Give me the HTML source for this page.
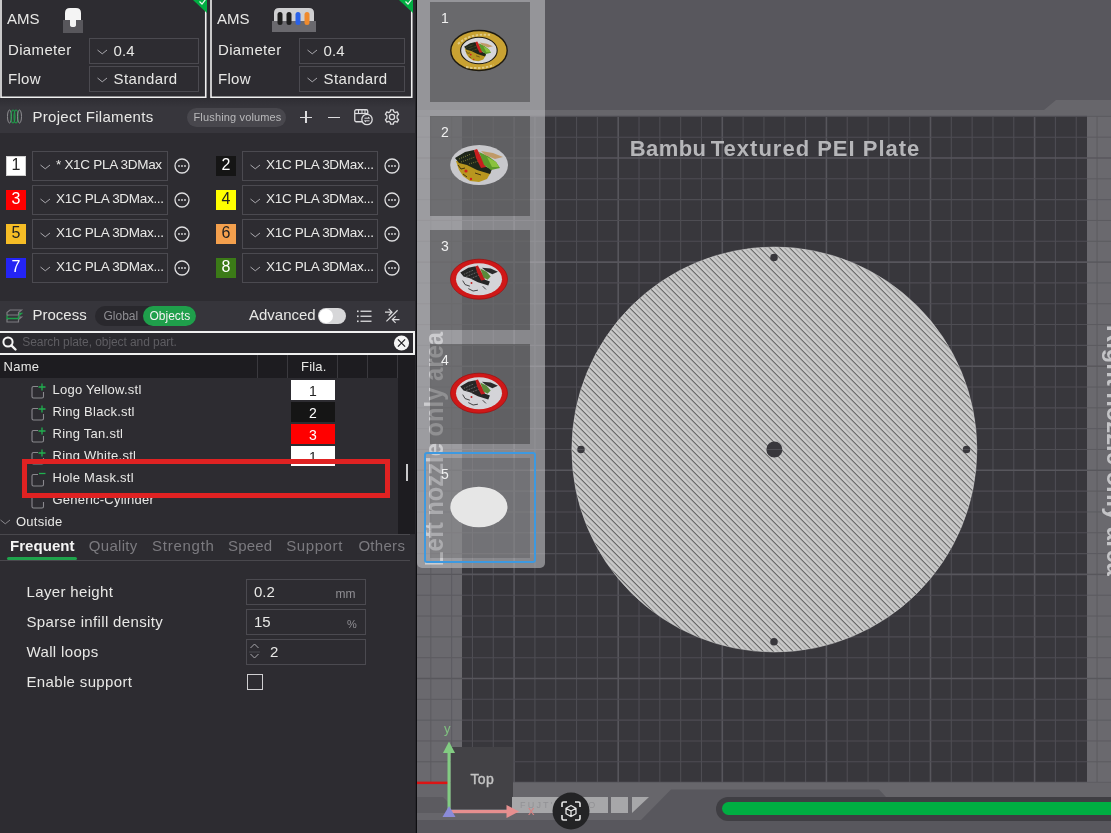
<!DOCTYPE html>
<html><head><meta charset="utf-8">
<style>
*{margin:0;padding:0;box-sizing:border-box}
html,body{width:1111px;height:833px;overflow:hidden;background:#2d2c31;font-family:"Liberation Sans",sans-serif;color:#e5e5e4}
.a{position:absolute}
.t{position:absolute;white-space:nowrap;line-height:1}
svg{position:absolute;overflow:visible}
</style></head><body>
<div class="a" style="left:0px;top:0px;width:415px;height:833px;background:#2d2c31;"></div>
<svg style="left:0px;top:0" width="209" height="100"><path d="M1.0 -2 L1.0 97.25 L205.75 97.25 L205.75 -2" fill="none" stroke="#f0f0f0" stroke-width="1.6"/></svg>
<svg style="left:193px;top:0" width="14" height="13"><path d="M0 0 L14 0 L14 13 Z" fill="#00ae42"/><path d="M6.5 1.5 L9 4 L12.5 -0.5" fill="none" stroke="#e8f5ec" stroke-width="1.2"/></svg>
<div class="t" style="left:7px;top:11.30px;font-size:15px;color:#e8e8e6;font-weight:400;letter-spacing:0px;">AMS</div>
<div class="t" style="left:8px;top:42.30px;font-size:15px;color:#e8e8e6;font-weight:400;letter-spacing:0.35px;">Diameter</div>
<div class="t" style="left:8px;top:70.80px;font-size:15px;color:#e8e8e6;font-weight:400;letter-spacing:0.3px;">Flow</div>
<svg style="left:210px;top:0" width="205" height="100"><path d="M1.0 -2 L1.0 97.25 L201.75 97.25 L201.75 -2" fill="none" stroke="#f0f0f0" stroke-width="1.6"/></svg>
<svg style="left:399px;top:0" width="14" height="13"><path d="M0 0 L14 0 L14 13 Z" fill="#00ae42"/><path d="M6.5 1.5 L9 4 L12.5 -0.5" fill="none" stroke="#e8f5ec" stroke-width="1.2"/></svg>
<div class="t" style="left:217px;top:11.30px;font-size:15px;color:#e8e8e6;font-weight:400;letter-spacing:0px;">AMS</div>
<div class="t" style="left:218px;top:42.30px;font-size:15px;color:#e8e8e6;font-weight:400;letter-spacing:0.35px;">Diameter</div>
<div class="t" style="left:218px;top:70.80px;font-size:15px;color:#e8e8e6;font-weight:400;letter-spacing:0.3px;">Flow</div>
<div class="a" style="left:89px;top:38px;width:110px;height:26px;border:1px solid #4b4a50;"></div>
<div class="a" style="left:89px;top:66px;width:110px;height:26px;border:1px solid #4b4a50;"></div>
<svg style="left:97px;top:49px" width="11" height="6"><path d="M0.5 1 L5.25 4.8 L10 1" fill="none" stroke="#a9a8ad" stroke-width="1"/></svg>
<svg style="left:97px;top:77px" width="11" height="6"><path d="M0.5 1 L5.25 4.8 L10 1" fill="none" stroke="#a9a8ad" stroke-width="1"/></svg>
<div class="t" style="left:113.5px;top:42.80px;font-size:15px;color:#e8e8e6;font-weight:400;letter-spacing:0.1px;">0.4</div>
<div class="t" style="left:113.5px;top:71.00px;font-size:15px;color:#e8e8e6;font-weight:400;letter-spacing:0.4px;">Standard</div>
<div class="a" style="left:299px;top:38px;width:106px;height:26px;border:1px solid #4b4a50;"></div>
<div class="a" style="left:299px;top:66px;width:106px;height:26px;border:1px solid #4b4a50;"></div>
<svg style="left:307px;top:49px" width="11" height="6"><path d="M0.5 1 L5.25 4.8 L10 1" fill="none" stroke="#a9a8ad" stroke-width="1"/></svg>
<svg style="left:307px;top:77px" width="11" height="6"><path d="M0.5 1 L5.25 4.8 L10 1" fill="none" stroke="#a9a8ad" stroke-width="1"/></svg>
<div class="t" style="left:323.5px;top:42.80px;font-size:15px;color:#e8e8e6;font-weight:400;letter-spacing:0.1px;">0.4</div>
<div class="t" style="left:323.5px;top:71.00px;font-size:15px;color:#e8e8e6;font-weight:400;letter-spacing:0.4px;">Standard</div>
<svg style="left:63px;top:8px" width="20" height="25">
<rect x="0" y="12" width="20" height="13" fill="#58575c"/>
<path d="M2 5 Q2 0 7 0 L13 0 Q18 0 18 5 L18 12 L13 12 L13 17 Q13 19 10 19 Q7 19 7 17 L7 12 L2 12 Z" fill="#f4f4f4"/>
</svg>
<svg style="left:272px;top:8px" width="44" height="24">
<rect x="0" y="13" width="44" height="11" fill="#6a696e"/>
<path d="M2 13 L2 5 Q2 0 7 0 L37 0 Q42 0 42 5 L42 13 Z" fill="#cfcfd1"/>
<rect x="5.5" y="4" width="5" height="13" rx="2.5" fill="#1e1e1e"/>
<rect x="14.5" y="4" width="5" height="13" rx="2.5" fill="#1e1e1e"/>
<rect x="23.5" y="4" width="5" height="13" rx="2.5" fill="#2a62e8"/>
<rect x="32.5" y="4" width="5" height="13" rx="2.5" fill="#f08a2c"/>
</svg>
<div class="a" style="left:0px;top:99px;width:415px;height:34px;background:linear-gradient(#2f2e34,#37363c 25%,#37363c);"></div>
<svg style="left:7px;top:109px" width="16" height="15">
<ellipse cx="2.5" cy="7.5" rx="2" ry="6.5" fill="none" stroke="#8d8c90" stroke-width="1"/>
<ellipse cx="6" cy="7.5" rx="2" ry="6.5" fill="none" stroke="#1f9d4a" stroke-width="1.1"/>
<ellipse cx="9" cy="7.5" rx="2" ry="6.5" fill="none" stroke="#1f9d4a" stroke-width="1.1"/>
<ellipse cx="12.5" cy="7.5" rx="2" ry="6.5" fill="none" stroke="#8d8c90" stroke-width="1"/>
</svg>
<div class="t" style="left:32.5px;top:109.30px;font-size:15px;color:#e8e8e6;font-weight:400;letter-spacing:0.3px;">Project Filaments</div>
<div class="a" style="left:187px;top:108px;width:99px;height:19px;background:#48474d;border-radius:10px"></div>
<div class="t" style="left:193.5px;top:111.69px;font-size:11px;color:#b9b9bb;font-weight:400;letter-spacing:0.15px;">Flushing volumes</div>
<div class="a" style="left:300px;top:116.5px;width:12px;height:1.5px;background:#dcdcde;"></div>
<div class="a" style="left:305.25px;top:111px;width:1.5px;height:12px;background:#dcdcde;"></div>
<div class="a" style="left:328px;top:116.5px;width:12px;height:1.5px;background:#dcdcde;"></div>
<svg style="left:354px;top:109px" width="19" height="16">
<rect x="0.75" y="0.75" width="13" height="12" rx="1.5" fill="none" stroke="#dcdcde" stroke-width="1.3"/>
<line x1="1" y1="4.5" x2="14" y2="4.5" stroke="#dcdcde" stroke-width="1.2"/>
<line x1="4.5" y1="1" x2="4.5" y2="4.5" stroke="#dcdcde" stroke-width="1"/><line x1="8" y1="1" x2="8" y2="4.5" stroke="#dcdcde" stroke-width="1"/><line x1="11" y1="1" x2="11" y2="4.5" stroke="#dcdcde" stroke-width="1"/>
<circle cx="13" cy="10.5" r="5.2" fill="#36353b" stroke="#dcdcde" stroke-width="1.3"/>
<path d="M10.5 9.2 L15.5 9.2 M14 8 L15.5 9.2 M15.5 11.8 L10.5 11.8 L12 13" fill="none" stroke="#dcdcde" stroke-width="1"/>
</svg>
<svg style="left:384px;top:109px" width="16" height="16" viewBox="0 0 16 16">
<path d="M6.6 0.8 L9.4 0.8 L9.8 2.8 L11.3 3.6 L13.2 2.9 L14.6 5.3 L13.1 6.7 L13.1 9.3 L14.6 10.7 L13.2 13.1 L11.3 12.4 L9.8 13.2 L9.4 15.2 L6.6 15.2 L6.2 13.2 L4.7 12.4 L2.8 13.1 L1.4 10.7 L2.9 9.3 L2.9 6.7 L1.4 5.3 L2.8 2.9 L4.7 3.6 L6.2 2.8 Z" fill="none" stroke="#dcdcde" stroke-width="1.3" stroke-linejoin="round"/>
<circle cx="8" cy="8" r="2.6" fill="none" stroke="#dcdcde" stroke-width="1.3"/>
</svg>
<div class="a" style="left:6px;top:156px;width:20px;height:20px;background:#ffffff;border:1px solid #cfcfcf;"></div>
<div class="t" style="left:11.5px;top:157.46px;font-size:16px;color:#222;font-weight:400;letter-spacing:0px;">1</div>
<div class="a" style="left:32px;top:151px;width:136px;height:30px;border:1px solid #4b4a50;"></div>
<svg style="left:40px;top:164px" width="11" height="6"><path d="M0.5 1 L5.25 4.8 L10 1" fill="none" stroke="#a9a8ad" stroke-width="1"/></svg>
<div class="t" style="left:56px;top:158.27px;font-size:13.5px;color:#e8e8e6;font-weight:400;letter-spacing:-0.3px;">* X1C PLA 3DMax</div>
<svg style="left:174px;top:158px" width="16" height="16"><circle cx="8" cy="8" r="7" fill="none" stroke="#dedee0" stroke-width="1.3"/><circle cx="5" cy="8" r="0.9" fill="#dedee0"/><circle cx="8" cy="8" r="0.9" fill="#dedee0"/><circle cx="11" cy="8" r="0.9" fill="#dedee0"/></svg>
<div class="a" style="left:216px;top:156px;width:20px;height:20px;background:#151515;"></div>
<div class="t" style="left:221.5px;top:157.46px;font-size:16px;color:#fff;font-weight:400;letter-spacing:0px;">2</div>
<div class="a" style="left:242px;top:151px;width:136px;height:30px;border:1px solid #4b4a50;"></div>
<svg style="left:250px;top:164px" width="11" height="6"><path d="M0.5 1 L5.25 4.8 L10 1" fill="none" stroke="#a9a8ad" stroke-width="1"/></svg>
<div class="t" style="left:266px;top:158.27px;font-size:13.5px;color:#e8e8e6;font-weight:400;letter-spacing:-0.3px;">X1C PLA 3DMax...</div>
<svg style="left:384px;top:158px" width="16" height="16"><circle cx="8" cy="8" r="7" fill="none" stroke="#dedee0" stroke-width="1.3"/><circle cx="5" cy="8" r="0.9" fill="#dedee0"/><circle cx="8" cy="8" r="0.9" fill="#dedee0"/><circle cx="11" cy="8" r="0.9" fill="#dedee0"/></svg>
<div class="a" style="left:6px;top:190px;width:20px;height:20px;background:#ff0000;"></div>
<div class="t" style="left:11.5px;top:191.46px;font-size:16px;color:#fff;font-weight:400;letter-spacing:0px;">3</div>
<div class="a" style="left:32px;top:185px;width:136px;height:30px;border:1px solid #4b4a50;"></div>
<svg style="left:40px;top:198px" width="11" height="6"><path d="M0.5 1 L5.25 4.8 L10 1" fill="none" stroke="#a9a8ad" stroke-width="1"/></svg>
<div class="t" style="left:56px;top:192.27px;font-size:13.5px;color:#e8e8e6;font-weight:400;letter-spacing:-0.3px;">X1C PLA 3DMax...</div>
<svg style="left:174px;top:192px" width="16" height="16"><circle cx="8" cy="8" r="7" fill="none" stroke="#dedee0" stroke-width="1.3"/><circle cx="5" cy="8" r="0.9" fill="#dedee0"/><circle cx="8" cy="8" r="0.9" fill="#dedee0"/><circle cx="11" cy="8" r="0.9" fill="#dedee0"/></svg>
<div class="a" style="left:216px;top:190px;width:20px;height:20px;background:#ffff00;"></div>
<div class="t" style="left:221.5px;top:191.46px;font-size:16px;color:#222;font-weight:400;letter-spacing:0px;">4</div>
<div class="a" style="left:242px;top:185px;width:136px;height:30px;border:1px solid #4b4a50;"></div>
<svg style="left:250px;top:198px" width="11" height="6"><path d="M0.5 1 L5.25 4.8 L10 1" fill="none" stroke="#a9a8ad" stroke-width="1"/></svg>
<div class="t" style="left:266px;top:192.27px;font-size:13.5px;color:#e8e8e6;font-weight:400;letter-spacing:-0.3px;">X1C PLA 3DMax...</div>
<svg style="left:384px;top:192px" width="16" height="16"><circle cx="8" cy="8" r="7" fill="none" stroke="#dedee0" stroke-width="1.3"/><circle cx="5" cy="8" r="0.9" fill="#dedee0"/><circle cx="8" cy="8" r="0.9" fill="#dedee0"/><circle cx="11" cy="8" r="0.9" fill="#dedee0"/></svg>
<div class="a" style="left:6px;top:224px;width:20px;height:20px;background:#f6bd26;"></div>
<div class="t" style="left:11.5px;top:225.46px;font-size:16px;color:#222;font-weight:400;letter-spacing:0px;">5</div>
<div class="a" style="left:32px;top:219px;width:136px;height:30px;border:1px solid #4b4a50;"></div>
<svg style="left:40px;top:232px" width="11" height="6"><path d="M0.5 1 L5.25 4.8 L10 1" fill="none" stroke="#a9a8ad" stroke-width="1"/></svg>
<div class="t" style="left:56px;top:226.27px;font-size:13.5px;color:#e8e8e6;font-weight:400;letter-spacing:-0.3px;">X1C PLA 3DMax...</div>
<svg style="left:174px;top:226px" width="16" height="16"><circle cx="8" cy="8" r="7" fill="none" stroke="#dedee0" stroke-width="1.3"/><circle cx="5" cy="8" r="0.9" fill="#dedee0"/><circle cx="8" cy="8" r="0.9" fill="#dedee0"/><circle cx="11" cy="8" r="0.9" fill="#dedee0"/></svg>
<div class="a" style="left:216px;top:224px;width:20px;height:20px;background:#f4a04d;"></div>
<div class="t" style="left:221.5px;top:225.46px;font-size:16px;color:#222;font-weight:400;letter-spacing:0px;">6</div>
<div class="a" style="left:242px;top:219px;width:136px;height:30px;border:1px solid #4b4a50;"></div>
<svg style="left:250px;top:232px" width="11" height="6"><path d="M0.5 1 L5.25 4.8 L10 1" fill="none" stroke="#a9a8ad" stroke-width="1"/></svg>
<div class="t" style="left:266px;top:226.27px;font-size:13.5px;color:#e8e8e6;font-weight:400;letter-spacing:-0.3px;">X1C PLA 3DMax...</div>
<svg style="left:384px;top:226px" width="16" height="16"><circle cx="8" cy="8" r="7" fill="none" stroke="#dedee0" stroke-width="1.3"/><circle cx="5" cy="8" r="0.9" fill="#dedee0"/><circle cx="8" cy="8" r="0.9" fill="#dedee0"/><circle cx="11" cy="8" r="0.9" fill="#dedee0"/></svg>
<div class="a" style="left:6px;top:258px;width:20px;height:20px;background:#2424f4;"></div>
<div class="t" style="left:11.5px;top:259.46px;font-size:16px;color:#fff;font-weight:400;letter-spacing:0px;">7</div>
<div class="a" style="left:32px;top:253px;width:136px;height:30px;border:1px solid #4b4a50;"></div>
<svg style="left:40px;top:266px" width="11" height="6"><path d="M0.5 1 L5.25 4.8 L10 1" fill="none" stroke="#a9a8ad" stroke-width="1"/></svg>
<div class="t" style="left:56px;top:260.27px;font-size:13.5px;color:#e8e8e6;font-weight:400;letter-spacing:-0.3px;">X1C PLA 3DMax...</div>
<svg style="left:174px;top:260px" width="16" height="16"><circle cx="8" cy="8" r="7" fill="none" stroke="#dedee0" stroke-width="1.3"/><circle cx="5" cy="8" r="0.9" fill="#dedee0"/><circle cx="8" cy="8" r="0.9" fill="#dedee0"/><circle cx="11" cy="8" r="0.9" fill="#dedee0"/></svg>
<div class="a" style="left:216px;top:258px;width:20px;height:20px;background:#3b7a17;"></div>
<div class="t" style="left:221.5px;top:259.46px;font-size:16px;color:#fff;font-weight:400;letter-spacing:0px;">8</div>
<div class="a" style="left:242px;top:253px;width:136px;height:30px;border:1px solid #4b4a50;"></div>
<svg style="left:250px;top:266px" width="11" height="6"><path d="M0.5 1 L5.25 4.8 L10 1" fill="none" stroke="#a9a8ad" stroke-width="1"/></svg>
<div class="t" style="left:266px;top:260.27px;font-size:13.5px;color:#e8e8e6;font-weight:400;letter-spacing:-0.3px;">X1C PLA 3DMax...</div>
<svg style="left:384px;top:260px" width="16" height="16"><circle cx="8" cy="8" r="7" fill="none" stroke="#dedee0" stroke-width="1.3"/><circle cx="5" cy="8" r="0.9" fill="#dedee0"/><circle cx="8" cy="8" r="0.9" fill="#dedee0"/><circle cx="11" cy="8" r="0.9" fill="#dedee0"/></svg>
<div class="a" style="left:0px;top:301px;width:415px;height:30px;background:#36353b;"></div>
<svg style="left:6px;top:308px" width="17" height="16">
<path d="M1 11.5 L4 9 L15.5 9 L12.5 11.5 L12.5 14 L1 14 Z" fill="none" stroke="#7d7c81" stroke-width="1.2"/>
<path d="M1 8 L4 5.5 L15.5 5.5 L12.5 8 L12.5 10.5 L1 10.5 Z" fill="#36353b" stroke="#1f9d4a" stroke-width="1.3"/>
<path d="M1 4.5 L4 2 L15.5 2 L12.5 4.5 L12.5 7 L1 7 Z" fill="#36353b" stroke="#7d7c81" stroke-width="1.2"/>
</svg>
<div class="t" style="left:32.5px;top:307.30px;font-size:15px;color:#e8e8e6;font-weight:400;letter-spacing:0px;">Process</div>
<div class="a" style="left:95px;top:306px;width:101px;height:20px;background:#29282d;border-radius:10px"></div>
<div class="t" style="left:103.5px;top:309.84px;font-size:12px;color:#8e8d92;font-weight:400;letter-spacing:0px;">Global</div>
<div class="a" style="left:143px;top:306px;width:53px;height:20px;background:#1f9f4b;border-radius:10px"></div>
<div class="t" style="left:149.5px;top:310.34px;font-size:12px;color:#f2f2f2;font-weight:400;letter-spacing:0px;">Objects</div>
<div class="t" style="left:249px;top:307.30px;font-size:15px;color:#e8e8e6;font-weight:400;letter-spacing:0px;">Advanced</div>
<div class="a" style="left:318px;top:308px;width:28px;height:16px;background:#d7d7d9;border-radius:8px"></div>
<div class="a" style="left:319px;top:309px;width:14px;height:14px;border-radius:7px;background:#ffffff"></div>
<svg style="left:357px;top:310px" width="15" height="13">
<rect x="0" y="0.5" width="1.6" height="1.6" fill="#dcdcde"/><rect x="3.5" y="0.6" width="11" height="1.3" fill="#dcdcde"/>
<rect x="0" y="5.5" width="1.6" height="1.6" fill="#dcdcde"/><rect x="3.5" y="5.6" width="11" height="1.3" fill="#dcdcde"/>
<rect x="0" y="10.5" width="1.6" height="1.6" fill="#dcdcde"/><rect x="3.5" y="10.6" width="11" height="1.3" fill="#dcdcde"/>
</svg>
<svg style="left:0;top:0" width="415" height="340">
<path d="M385 312.2 L392 312.2 M388.7 308.9 L392 312.2 L388.7 315.5" fill="none" stroke="#dcdcde" stroke-width="1.2"/>
<path d="M399.5 319.6 L392.3 319.6 M395.6 316.3 L392.3 319.6 L395.6 322.9" fill="none" stroke="#dcdcde" stroke-width="1.2"/>
<path d="M397.6 310.3 L386.4 321.4" fill="none" stroke="#dcdcde" stroke-width="1.2"/>
</svg>
<div class="a" style="left:-2px;top:331px;width:417px;height:24px;border:2px solid #f0f0f0;background:#2a292e"></div>
<svg style="left:2px;top:336px" width="15" height="15">
<circle cx="6" cy="6" r="4.6" fill="none" stroke="#f4f4f4" stroke-width="2"/>
<path d="M9.3 9.3 L13.5 13.5" stroke="#f4f4f4" stroke-width="2.4" stroke-linecap="round"/>
</svg>
<div class="t" style="left:22.3px;top:335.84px;font-size:12px;color:#5e5d62;font-weight:400;letter-spacing:-0.08px;">Search plate, object and part.</div>
<svg style="left:394px;top:335.5px" width="15" height="15">
<circle cx="7.5" cy="7" r="7.6" fill="#f4f4f4"/>
<path d="M3.9 3.4 L11.1 10.6 M11.1 3.4 L3.9 10.6" stroke="#202024" stroke-width="1.2"/>
</svg>
<div class="a" style="left:0px;top:355px;width:415px;height:23px;background:#1d1c20;"></div>
<div class="t" style="left:3.5px;top:360.00px;font-size:13px;color:#e8e8e6;font-weight:400;letter-spacing:0.3px;">Name</div>
<div class="a" style="left:257px;top:355px;width:1px;height:23px;background:#3a393e;"></div>
<div class="a" style="left:287px;top:355px;width:1px;height:23px;background:#3a393e;"></div>
<div class="a" style="left:337px;top:355px;width:1px;height:23px;background:#3a393e;"></div>
<div class="a" style="left:367px;top:355px;width:1px;height:23px;background:#3a393e;"></div>
<div class="a" style="left:397px;top:355px;width:1px;height:23px;background:#3a393e;"></div>
<div class="t" style="left:301px;top:359.50px;font-size:13px;color:#e8e8e6;font-weight:400;letter-spacing:0.2px;">Fila.</div>
<div class="a" style="left:0px;top:378px;width:398px;height:156px;background:#2d2c31;"></div>
<div class="a" style="left:398px;top:378px;width:17px;height:156px;background:#1d1c20;"></div>
<div class="a" style="left:406px;top:464px;width:2px;height:17px;background:#c9c9cb;"></div>
<div class="t" style="left:52.5px;top:382.50px;font-size:13px;color:#e8e8e6;font-weight:400;letter-spacing:0.25px;">Logo Yellow.stl</div>
<svg style="left:31px;top:382.5px" width="16" height="16"><path d="M7 3.5 L2.5 3.5 Q1 3.5 1 5 L1 13.5 Q1 15 2.5 15 L11 15 Q12.5 15 12.5 13.5 L12.5 9" fill="none" stroke="#8a898e" stroke-width="1.1"/><path d="M11 0.5 L11 7.5 M7.5 4 L14.5 4" stroke="#20b04f" stroke-width="1.3"/></svg>
<div class="t" style="left:52.5px;top:404.50px;font-size:13px;color:#e8e8e6;font-weight:400;letter-spacing:0.25px;">Ring Black.stl</div>
<svg style="left:31px;top:404.5px" width="16" height="16"><path d="M7 3.5 L2.5 3.5 Q1 3.5 1 5 L1 13.5 Q1 15 2.5 15 L11 15 Q12.5 15 12.5 13.5 L12.5 9" fill="none" stroke="#8a898e" stroke-width="1.1"/><path d="M11 0.5 L11 7.5 M7.5 4 L14.5 4" stroke="#20b04f" stroke-width="1.3"/></svg>
<div class="t" style="left:52.5px;top:426.50px;font-size:13px;color:#e8e8e6;font-weight:400;letter-spacing:0.25px;">Ring Tan.stl</div>
<svg style="left:31px;top:426.5px" width="16" height="16"><path d="M7 3.5 L2.5 3.5 Q1 3.5 1 5 L1 13.5 Q1 15 2.5 15 L11 15 Q12.5 15 12.5 13.5 L12.5 9" fill="none" stroke="#8a898e" stroke-width="1.1"/><path d="M11 0.5 L11 7.5 M7.5 4 L14.5 4" stroke="#20b04f" stroke-width="1.3"/></svg>
<div class="t" style="left:52.5px;top:448.50px;font-size:13px;color:#e8e8e6;font-weight:400;letter-spacing:0.25px;">Ring White.stl</div>
<svg style="left:31px;top:448.5px" width="16" height="16"><path d="M7 3.5 L2.5 3.5 Q1 3.5 1 5 L1 13.5 Q1 15 2.5 15 L11 15 Q12.5 15 12.5 13.5 L12.5 9" fill="none" stroke="#8a898e" stroke-width="1.1"/><path d="M11 0.5 L11 7.5 M7.5 4 L14.5 4" stroke="#20b04f" stroke-width="1.3"/></svg>
<div class="t" style="left:52.5px;top:470.50px;font-size:13px;color:#e8e8e6;font-weight:400;letter-spacing:0.25px;">Hole Mask.stl</div>
<svg style="left:31px;top:470.5px" width="16" height="16"><path d="M7 3.5 L2.5 3.5 Q1 3.5 1 5 L1 13.5 Q1 15 2.5 15 L11 15 Q12.5 15 12.5 13.5 L12.5 9" fill="none" stroke="#8a898e" stroke-width="1.1"/><path d="M8 2.5 L14.5 2.5" stroke="#20b04f" stroke-width="1.3"/></svg>
<div class="t" style="left:52.5px;top:492.50px;font-size:13px;color:#e8e8e6;font-weight:400;letter-spacing:0.25px;">Generic-Cylinder</div>
<svg style="left:31px;top:492.5px" width="16" height="16"><path d="M7 3.5 L2.5 3.5 Q1 3.5 1 5 L1 13.5 Q1 15 2.5 15 L11 15 Q12.5 15 12.5 13.5 L12.5 9" fill="none" stroke="#8a898e" stroke-width="1.1"/></svg>
<div class="t" style="left:16px;top:515.00px;font-size:13px;color:#e8e8e6;font-weight:400;letter-spacing:0.25px;">Outside</div>
<svg style="left:0px;top:519px" width="11" height="6"><path d="M0.5 1 L5.25 4.8 L10 1" fill="none" stroke="#8a898e" stroke-width="1"/></svg>
<div class="a" style="left:291px;top:380px;width:44px;height:20px;background:#ffffff;"></div>
<div class="t" style="left:309px;top:383.65px;font-size:14px;color:#222;font-weight:400;letter-spacing:0px;">1</div>
<div class="a" style="left:291px;top:402px;width:44px;height:20px;background:#151515;"></div>
<div class="t" style="left:309px;top:405.65px;font-size:14px;color:#fff;font-weight:400;letter-spacing:0px;">2</div>
<div class="a" style="left:291px;top:424px;width:44px;height:20px;background:#ff0000;"></div>
<div class="t" style="left:309px;top:427.65px;font-size:14px;color:#fff;font-weight:400;letter-spacing:0px;">3</div>
<div class="a" style="left:291px;top:446px;width:44px;height:20px;background:#ffffff;"></div>
<div class="t" style="left:309px;top:449.65px;font-size:14px;color:#222;font-weight:400;letter-spacing:0px;">1</div>
<div class="a" style="left:22px;top:458.5px;width:368px;height:39px;border:5.5px solid #e02222"></div>
<div class="a" style="left:0px;top:534px;width:410px;height:1px;background:#49484d;"></div>
<div class="t" style="left:10px;top:538.30px;font-size:15px;color:#f4f4f4;font-weight:700;letter-spacing:0.05px;">Frequent</div>
<div class="a" style="left:7px;top:557px;width:70px;height:3px;background:#1fa34c;border-radius:2px"></div>
<div class="t" style="left:88.8px;top:538.30px;font-size:15px;color:#7b7a7f;font-weight:400;letter-spacing:0.3px;">Quality</div>
<div class="t" style="left:152px;top:538.30px;font-size:15px;color:#7b7a7f;font-weight:400;letter-spacing:0.75px;">Strength</div>
<div class="t" style="left:228px;top:538.30px;font-size:15px;color:#7b7a7f;font-weight:400;letter-spacing:0.2px;">Speed</div>
<div class="t" style="left:286.2px;top:538.30px;font-size:15px;color:#7b7a7f;font-weight:400;letter-spacing:0.6px;">Support</div>
<div class="t" style="left:358.4px;top:538.30px;font-size:15px;color:#7b7a7f;font-weight:400;letter-spacing:0.3px;">Others</div>
<div class="a" style="left:0px;top:560px;width:410px;height:1px;background:#49484d;"></div>
<div class="t" style="left:26.5px;top:584.30px;font-size:15px;color:#e8e8e6;font-weight:400;letter-spacing:0.35px;">Layer height</div>
<div class="t" style="left:26.5px;top:614.30px;font-size:15px;color:#e8e8e6;font-weight:400;letter-spacing:0.35px;">Sparse infill density</div>
<div class="t" style="left:26.5px;top:644.30px;font-size:15px;color:#e8e8e6;font-weight:400;letter-spacing:0.35px;">Wall loops</div>
<div class="t" style="left:26.5px;top:674.30px;font-size:15px;color:#e8e8e6;font-weight:400;letter-spacing:0.35px;">Enable support</div>
<div class="a" style="left:246px;top:579px;width:120px;height:26px;border:1px solid #4b4a50;"></div>
<div class="a" style="left:246px;top:609px;width:120px;height:26px;border:1px solid #4b4a50;"></div>
<div class="a" style="left:246px;top:639px;width:120px;height:26px;border:1px solid #4b4a50;"></div>
<div class="t" style="left:254px;top:584.10px;font-size:15px;color:#e8e8e6;font-weight:400;letter-spacing:0px;">0.2</div>
<div class="t" style="left:335.5px;top:588.14px;font-size:12px;color:#8f8e93;font-weight:400;letter-spacing:0px;">mm</div>
<div class="t" style="left:254px;top:614.10px;font-size:15px;color:#e8e8e6;font-weight:400;letter-spacing:0px;">15</div>
<div class="t" style="left:347px;top:619.19px;font-size:11px;color:#8f8e93;font-weight:400;letter-spacing:0px;">%</div>
<svg style="left:249px;top:642px" width="12" height="18">
<path d="M1.5 6 L5.5 2 L9.5 6" fill="none" stroke="#a9a8ad" stroke-width="1"/>
<line x1="0" y1="10" x2="11" y2="10" stroke="#4b4a50" stroke-width="1"/>
<path d="M1.5 12 L5.5 16 L9.5 12" fill="none" stroke="#a9a8ad" stroke-width="1"/>
</svg>
<div class="t" style="left:270px;top:644.10px;font-size:15px;color:#e8e8e6;font-weight:400;letter-spacing:0px;">2</div>
<div class="a" style="left:247px;top:674px;width:16px;height:16px;border:1.5px solid #cfcfd1;"></div>
<svg style="left:0;top:0" width="420" height="833"><rect x="415.8" y="0" width="1.4" height="833" fill="#0e0e11"/></svg>
<div class="a" style="left:417px;top:0;width:694px;height:833px;overflow:hidden;background:#58575d">
<svg style="left:-417px;top:0" width="1111" height="833">
<defs><pattern id="stripes" patternUnits="userSpaceOnUse" width="7.07" height="20" patternTransform="rotate(-45)"><rect x="0" y="0" width="7.07" height="20" fill="#c2c2c2"/><rect x="0.85" y="0" width="1.15" height="20" fill="#5c5c5c"/><rect x="2.0" y="0" width="1.6" height="20" fill="#d0d0d0"/><rect x="4.4" y="0" width="1.0" height="20" fill="#a6a6a6"/><rect x="5.8" y="0" width="1.27" height="20" fill="#cacaca"/></pattern></defs>
<path d="M417 110 L1044 110 L1056 100 L1111 100 L1111 117 L417 117 Z" fill="#67666b"/>
<rect x="462" y="116.36000000000001" width="625" height="666.24" fill="#38373c"/>
<rect x="417" y="116.36000000000001" width="45" height="666.24" fill="#6a696e"/>
<rect x="1087" y="116.36000000000001" width="30" height="666.24" fill="#6a696e"/>
<line x1="472.46" y1="116.36" x2="472.46" y2="782.60" stroke="#4e4d53" stroke-width="1.1"/>
<line x1="493.28" y1="116.36" x2="493.28" y2="782.60" stroke="#4e4d53" stroke-width="1.1"/>
<line x1="514.10" y1="116.36" x2="514.10" y2="782.60" stroke="#57565c" stroke-width="1.6"/>
<line x1="534.92" y1="116.36" x2="534.92" y2="782.60" stroke="#4e4d53" stroke-width="1.1"/>
<line x1="555.74" y1="116.36" x2="555.74" y2="782.60" stroke="#4e4d53" stroke-width="1.1"/>
<line x1="576.56" y1="116.36" x2="576.56" y2="782.60" stroke="#4e4d53" stroke-width="1.1"/>
<line x1="597.38" y1="116.36" x2="597.38" y2="782.60" stroke="#4e4d53" stroke-width="1.1"/>
<line x1="618.20" y1="116.36" x2="618.20" y2="782.60" stroke="#57565c" stroke-width="1.6"/>
<line x1="639.02" y1="116.36" x2="639.02" y2="782.60" stroke="#4e4d53" stroke-width="1.1"/>
<line x1="659.84" y1="116.36" x2="659.84" y2="782.60" stroke="#4e4d53" stroke-width="1.1"/>
<line x1="680.66" y1="116.36" x2="680.66" y2="782.60" stroke="#4e4d53" stroke-width="1.1"/>
<line x1="701.48" y1="116.36" x2="701.48" y2="782.60" stroke="#4e4d53" stroke-width="1.1"/>
<line x1="722.30" y1="116.36" x2="722.30" y2="782.60" stroke="#57565c" stroke-width="1.6"/>
<line x1="743.12" y1="116.36" x2="743.12" y2="782.60" stroke="#4e4d53" stroke-width="1.1"/>
<line x1="763.94" y1="116.36" x2="763.94" y2="782.60" stroke="#4e4d53" stroke-width="1.1"/>
<line x1="784.76" y1="116.36" x2="784.76" y2="782.60" stroke="#4e4d53" stroke-width="1.1"/>
<line x1="805.58" y1="116.36" x2="805.58" y2="782.60" stroke="#4e4d53" stroke-width="1.1"/>
<line x1="826.40" y1="116.36" x2="826.40" y2="782.60" stroke="#57565c" stroke-width="1.6"/>
<line x1="847.22" y1="116.36" x2="847.22" y2="782.60" stroke="#4e4d53" stroke-width="1.1"/>
<line x1="868.04" y1="116.36" x2="868.04" y2="782.60" stroke="#4e4d53" stroke-width="1.1"/>
<line x1="888.86" y1="116.36" x2="888.86" y2="782.60" stroke="#4e4d53" stroke-width="1.1"/>
<line x1="909.68" y1="116.36" x2="909.68" y2="782.60" stroke="#4e4d53" stroke-width="1.1"/>
<line x1="930.50" y1="116.36" x2="930.50" y2="782.60" stroke="#57565c" stroke-width="1.6"/>
<line x1="951.32" y1="116.36" x2="951.32" y2="782.60" stroke="#4e4d53" stroke-width="1.1"/>
<line x1="972.14" y1="116.36" x2="972.14" y2="782.60" stroke="#4e4d53" stroke-width="1.1"/>
<line x1="992.96" y1="116.36" x2="992.96" y2="782.60" stroke="#4e4d53" stroke-width="1.1"/>
<line x1="1013.78" y1="116.36" x2="1013.78" y2="782.60" stroke="#4e4d53" stroke-width="1.1"/>
<line x1="1034.60" y1="116.36" x2="1034.60" y2="782.60" stroke="#57565c" stroke-width="1.6"/>
<line x1="1055.42" y1="116.36" x2="1055.42" y2="782.60" stroke="#4e4d53" stroke-width="1.1"/>
<line x1="1076.24" y1="116.36" x2="1076.24" y2="782.60" stroke="#4e4d53" stroke-width="1.1"/>
<line x1="462" y1="782.60" x2="1087" y2="782.60" stroke="#57565c" stroke-width="1.6"/>
<line x1="462" y1="761.78" x2="1087" y2="761.78" stroke="#4e4d53" stroke-width="1.1"/>
<line x1="462" y1="740.96" x2="1087" y2="740.96" stroke="#4e4d53" stroke-width="1.1"/>
<line x1="462" y1="720.14" x2="1087" y2="720.14" stroke="#4e4d53" stroke-width="1.1"/>
<line x1="462" y1="699.32" x2="1087" y2="699.32" stroke="#4e4d53" stroke-width="1.1"/>
<line x1="462" y1="678.50" x2="1087" y2="678.50" stroke="#57565c" stroke-width="1.6"/>
<line x1="462" y1="657.68" x2="1087" y2="657.68" stroke="#4e4d53" stroke-width="1.1"/>
<line x1="462" y1="636.86" x2="1087" y2="636.86" stroke="#4e4d53" stroke-width="1.1"/>
<line x1="462" y1="616.04" x2="1087" y2="616.04" stroke="#4e4d53" stroke-width="1.1"/>
<line x1="462" y1="595.22" x2="1087" y2="595.22" stroke="#4e4d53" stroke-width="1.1"/>
<line x1="462" y1="574.40" x2="1087" y2="574.40" stroke="#57565c" stroke-width="1.6"/>
<line x1="462" y1="553.58" x2="1087" y2="553.58" stroke="#4e4d53" stroke-width="1.1"/>
<line x1="462" y1="532.76" x2="1087" y2="532.76" stroke="#4e4d53" stroke-width="1.1"/>
<line x1="462" y1="511.94" x2="1087" y2="511.94" stroke="#4e4d53" stroke-width="1.1"/>
<line x1="462" y1="491.12" x2="1087" y2="491.12" stroke="#4e4d53" stroke-width="1.1"/>
<line x1="462" y1="470.30" x2="1087" y2="470.30" stroke="#57565c" stroke-width="1.6"/>
<line x1="462" y1="449.48" x2="1087" y2="449.48" stroke="#4e4d53" stroke-width="1.1"/>
<line x1="462" y1="428.66" x2="1087" y2="428.66" stroke="#4e4d53" stroke-width="1.1"/>
<line x1="462" y1="407.84" x2="1087" y2="407.84" stroke="#4e4d53" stroke-width="1.1"/>
<line x1="462" y1="387.02" x2="1087" y2="387.02" stroke="#4e4d53" stroke-width="1.1"/>
<line x1="462" y1="366.20" x2="1087" y2="366.20" stroke="#57565c" stroke-width="1.6"/>
<line x1="462" y1="345.38" x2="1087" y2="345.38" stroke="#4e4d53" stroke-width="1.1"/>
<line x1="462" y1="324.56" x2="1087" y2="324.56" stroke="#4e4d53" stroke-width="1.1"/>
<line x1="462" y1="303.74" x2="1087" y2="303.74" stroke="#4e4d53" stroke-width="1.1"/>
<line x1="462" y1="282.92" x2="1087" y2="282.92" stroke="#4e4d53" stroke-width="1.1"/>
<line x1="462" y1="262.10" x2="1087" y2="262.10" stroke="#57565c" stroke-width="1.6"/>
<line x1="462" y1="241.28" x2="1087" y2="241.28" stroke="#4e4d53" stroke-width="1.1"/>
<line x1="462" y1="220.46" x2="1087" y2="220.46" stroke="#4e4d53" stroke-width="1.1"/>
<line x1="462" y1="199.64" x2="1087" y2="199.64" stroke="#4e4d53" stroke-width="1.1"/>
<line x1="462" y1="178.82" x2="1087" y2="178.82" stroke="#4e4d53" stroke-width="1.1"/>
<line x1="462" y1="158.00" x2="1087" y2="158.00" stroke="#57565c" stroke-width="1.6"/>
<line x1="462" y1="137.18" x2="1087" y2="137.18" stroke="#4e4d53" stroke-width="1.1"/>
<line x1="462" y1="116.36" x2="1087" y2="116.36" stroke="#4e4d53" stroke-width="1.1"/>
<line x1="430.82" y1="116.36" x2="430.82" y2="782.60" stroke="#5c5b60" stroke-width="1.0"/>
<line x1="451.64" y1="116.36" x2="451.64" y2="782.60" stroke="#5c5b60" stroke-width="1.0"/>
<line x1="417" y1="782.60" x2="462" y2="782.60" stroke="#58575c" stroke-width="1.4"/>
<line x1="417" y1="761.78" x2="462" y2="761.78" stroke="#5c5b60" stroke-width="1.0"/>
<line x1="417" y1="740.96" x2="462" y2="740.96" stroke="#5c5b60" stroke-width="1.0"/>
<line x1="417" y1="720.14" x2="462" y2="720.14" stroke="#5c5b60" stroke-width="1.0"/>
<line x1="417" y1="699.32" x2="462" y2="699.32" stroke="#5c5b60" stroke-width="1.0"/>
<line x1="417" y1="678.50" x2="462" y2="678.50" stroke="#58575c" stroke-width="1.4"/>
<line x1="417" y1="657.68" x2="462" y2="657.68" stroke="#5c5b60" stroke-width="1.0"/>
<line x1="417" y1="636.86" x2="462" y2="636.86" stroke="#5c5b60" stroke-width="1.0"/>
<line x1="417" y1="616.04" x2="462" y2="616.04" stroke="#5c5b60" stroke-width="1.0"/>
<line x1="417" y1="595.22" x2="462" y2="595.22" stroke="#5c5b60" stroke-width="1.0"/>
<line x1="417" y1="574.40" x2="462" y2="574.40" stroke="#58575c" stroke-width="1.4"/>
<line x1="417" y1="553.58" x2="462" y2="553.58" stroke="#5c5b60" stroke-width="1.0"/>
<line x1="417" y1="532.76" x2="462" y2="532.76" stroke="#5c5b60" stroke-width="1.0"/>
<line x1="417" y1="511.94" x2="462" y2="511.94" stroke="#5c5b60" stroke-width="1.0"/>
<line x1="417" y1="491.12" x2="462" y2="491.12" stroke="#5c5b60" stroke-width="1.0"/>
<line x1="417" y1="470.30" x2="462" y2="470.30" stroke="#58575c" stroke-width="1.4"/>
<line x1="417" y1="449.48" x2="462" y2="449.48" stroke="#5c5b60" stroke-width="1.0"/>
<line x1="417" y1="428.66" x2="462" y2="428.66" stroke="#5c5b60" stroke-width="1.0"/>
<line x1="417" y1="407.84" x2="462" y2="407.84" stroke="#5c5b60" stroke-width="1.0"/>
<line x1="417" y1="387.02" x2="462" y2="387.02" stroke="#5c5b60" stroke-width="1.0"/>
<line x1="417" y1="366.20" x2="462" y2="366.20" stroke="#58575c" stroke-width="1.4"/>
<line x1="417" y1="345.38" x2="462" y2="345.38" stroke="#5c5b60" stroke-width="1.0"/>
<line x1="417" y1="324.56" x2="462" y2="324.56" stroke="#5c5b60" stroke-width="1.0"/>
<line x1="417" y1="303.74" x2="462" y2="303.74" stroke="#5c5b60" stroke-width="1.0"/>
<line x1="417" y1="282.92" x2="462" y2="282.92" stroke="#5c5b60" stroke-width="1.0"/>
<line x1="417" y1="262.10" x2="462" y2="262.10" stroke="#58575c" stroke-width="1.4"/>
<line x1="417" y1="241.28" x2="462" y2="241.28" stroke="#5c5b60" stroke-width="1.0"/>
<line x1="417" y1="220.46" x2="462" y2="220.46" stroke="#5c5b60" stroke-width="1.0"/>
<line x1="417" y1="199.64" x2="462" y2="199.64" stroke="#5c5b60" stroke-width="1.0"/>
<line x1="417" y1="178.82" x2="462" y2="178.82" stroke="#5c5b60" stroke-width="1.0"/>
<line x1="417" y1="158.00" x2="462" y2="158.00" stroke="#58575c" stroke-width="1.4"/>
<line x1="417" y1="137.18" x2="462" y2="137.18" stroke="#5c5b60" stroke-width="1.0"/>
<line x1="417" y1="116.36" x2="462" y2="116.36" stroke="#5c5b60" stroke-width="1.0"/>
<line x1="1097.06" y1="116.36" x2="1097.06" y2="782.60" stroke="#5c5b60" stroke-width="1.0"/>
<line x1="1087" y1="782.60" x2="1111" y2="782.60" stroke="#58575c" stroke-width="1.4"/>
<line x1="1087" y1="761.78" x2="1111" y2="761.78" stroke="#5c5b60" stroke-width="1.0"/>
<line x1="1087" y1="740.96" x2="1111" y2="740.96" stroke="#5c5b60" stroke-width="1.0"/>
<line x1="1087" y1="720.14" x2="1111" y2="720.14" stroke="#5c5b60" stroke-width="1.0"/>
<line x1="1087" y1="699.32" x2="1111" y2="699.32" stroke="#5c5b60" stroke-width="1.0"/>
<line x1="1087" y1="678.50" x2="1111" y2="678.50" stroke="#58575c" stroke-width="1.4"/>
<line x1="1087" y1="657.68" x2="1111" y2="657.68" stroke="#5c5b60" stroke-width="1.0"/>
<line x1="1087" y1="636.86" x2="1111" y2="636.86" stroke="#5c5b60" stroke-width="1.0"/>
<line x1="1087" y1="616.04" x2="1111" y2="616.04" stroke="#5c5b60" stroke-width="1.0"/>
<line x1="1087" y1="595.22" x2="1111" y2="595.22" stroke="#5c5b60" stroke-width="1.0"/>
<line x1="1087" y1="574.40" x2="1111" y2="574.40" stroke="#58575c" stroke-width="1.4"/>
<line x1="1087" y1="553.58" x2="1111" y2="553.58" stroke="#5c5b60" stroke-width="1.0"/>
<line x1="1087" y1="532.76" x2="1111" y2="532.76" stroke="#5c5b60" stroke-width="1.0"/>
<line x1="1087" y1="511.94" x2="1111" y2="511.94" stroke="#5c5b60" stroke-width="1.0"/>
<line x1="1087" y1="491.12" x2="1111" y2="491.12" stroke="#5c5b60" stroke-width="1.0"/>
<line x1="1087" y1="470.30" x2="1111" y2="470.30" stroke="#58575c" stroke-width="1.4"/>
<line x1="1087" y1="449.48" x2="1111" y2="449.48" stroke="#5c5b60" stroke-width="1.0"/>
<line x1="1087" y1="428.66" x2="1111" y2="428.66" stroke="#5c5b60" stroke-width="1.0"/>
<line x1="1087" y1="407.84" x2="1111" y2="407.84" stroke="#5c5b60" stroke-width="1.0"/>
<line x1="1087" y1="387.02" x2="1111" y2="387.02" stroke="#5c5b60" stroke-width="1.0"/>
<line x1="1087" y1="366.20" x2="1111" y2="366.20" stroke="#58575c" stroke-width="1.4"/>
<line x1="1087" y1="345.38" x2="1111" y2="345.38" stroke="#5c5b60" stroke-width="1.0"/>
<line x1="1087" y1="324.56" x2="1111" y2="324.56" stroke="#5c5b60" stroke-width="1.0"/>
<line x1="1087" y1="303.74" x2="1111" y2="303.74" stroke="#5c5b60" stroke-width="1.0"/>
<line x1="1087" y1="282.92" x2="1111" y2="282.92" stroke="#5c5b60" stroke-width="1.0"/>
<line x1="1087" y1="262.10" x2="1111" y2="262.10" stroke="#58575c" stroke-width="1.4"/>
<line x1="1087" y1="241.28" x2="1111" y2="241.28" stroke="#5c5b60" stroke-width="1.0"/>
<line x1="1087" y1="220.46" x2="1111" y2="220.46" stroke="#5c5b60" stroke-width="1.0"/>
<line x1="1087" y1="199.64" x2="1111" y2="199.64" stroke="#5c5b60" stroke-width="1.0"/>
<line x1="1087" y1="178.82" x2="1111" y2="178.82" stroke="#5c5b60" stroke-width="1.0"/>
<line x1="1087" y1="158.00" x2="1111" y2="158.00" stroke="#58575c" stroke-width="1.4"/>
<line x1="1087" y1="137.18" x2="1111" y2="137.18" stroke="#5c5b60" stroke-width="1.0"/>
<line x1="1087" y1="116.36" x2="1111" y2="116.36" stroke="#5c5b60" stroke-width="1.0"/>
<path d="M417 782.6 L1111 782.6 L1111 797 L886 797 L879 789.5 L671 789.5 L641 820 L417 820 Z" fill="#67666b"/>
<rect x="417" y="781.6" width="32" height="2.5" fill="#dc1414"/>
<path d="M417 797 L443 797 L450 804 L450 813 L417 813 Z" fill="#5c5b60"/>
<path d="M571.85 449.50 A202.5 202.5 0 1 0 976.85 449.50 A202.5 202.5 0 1 0 571.85 449.50 ZM766.35 449.50 A8 8 0 1 0 782.35 449.50 A8 8 0 1 0 766.35 449.50 ZM770.20 257.50 A3.8 3.8 0 1 0 777.80 257.50 A3.8 3.8 0 1 0 770.20 257.50 ZM770.20 641.80 A3.8 3.8 0 1 0 777.80 641.80 A3.8 3.8 0 1 0 770.20 641.80 ZM577.20 449.50 A3.8 3.8 0 1 0 584.80 449.50 A3.8 3.8 0 1 0 577.20 449.50 ZM962.70 449.50 A3.8 3.8 0 1 0 970.30 449.50 A3.8 3.8 0 1 0 962.70 449.50 Z" fill="url(#stripes)" fill-rule="evenodd"/>
<circle cx="774.35" cy="449.5" r="202.5" fill="none" stroke="#dadada" stroke-width="0.8" opacity="0.6"/>
</svg>
</div>
<div class="t" style="left:629.8px;top:137.88px;font-size:22px;color:#b6b6b9;font-weight:700;letter-spacing:0.4px;">Bambu</div>
<div class="t" style="left:710.8px;top:137.88px;font-size:22px;color:#b6b6b9;font-weight:700;letter-spacing:1.0px;">Textured PEI Plate</div>
<div class="t" style="left:442.8px;top:565.5px;font-size:26px;color:#e2e2e4;transform:rotate(-90deg);transform-origin:0 0;"><span style="position:absolute;left:0;top:-22.0px;font-weight:700;transform:scaleX(0.915);transform-origin:0 0">Left nozzle only area</span></div>
<div class="t" style="left:1106.5px;top:325px;font-size:26px;color:#c4c4c7;transform:rotate(90deg);transform-origin:0 0;"><span style="position:absolute;left:0;top:-22.0px;font-weight:700;transform:scaleX(0.914);transform-origin:0 0">Right nozzle only area</span></div>
<div class="a" style="left:417px;top:0px;width:128px;height:568px;background:rgba(190,190,193,0.6);border-radius:0 0 5px 5px"></div>
<div class="a" style="left:430px;top:2px;width:100px;height:100px;background:#b4b4b4;mix-blend-mode:multiply"></div>
<div class="t" style="left:441px;top:11.15px;font-size:14px;color:#f0f0f0;font-weight:400;letter-spacing:0px;">1</div>
<div class="a" style="left:430px;top:116px;width:100px;height:100px;background:#b4b4b4;mix-blend-mode:multiply"></div>
<div class="t" style="left:441px;top:125.15px;font-size:14px;color:#f0f0f0;font-weight:400;letter-spacing:0px;">2</div>
<div class="a" style="left:430px;top:230px;width:100px;height:100px;background:#b4b4b4;mix-blend-mode:multiply"></div>
<div class="t" style="left:441px;top:239.15px;font-size:14px;color:#f0f0f0;font-weight:400;letter-spacing:0px;">3</div>
<div class="a" style="left:430px;top:344px;width:100px;height:100px;background:#b4b4b4;mix-blend-mode:multiply"></div>
<div class="t" style="left:441px;top:353.15px;font-size:14px;color:#f0f0f0;font-weight:400;letter-spacing:0px;">4</div>
<div class="a" style="left:430px;top:458px;width:100px;height:100px;background:#d6d6d6;mix-blend-mode:multiply"></div>
<div class="t" style="left:441px;top:467.15px;font-size:14px;color:#f0f0f0;font-weight:400;letter-spacing:0px;">5</div>
<div class="a" style="left:424px;top:452px;width:112px;height:111px;border:2px solid #3d99e0;border-radius:3px"></div>
<svg style="left:0;top:0" width="1111" height="833">
<ellipse cx="479" cy="50.5" rx="28.2" ry="20" fill="#c9a232" stroke="#1e1a10" stroke-width="1.4"/>
<path d="M458 44 Q470 33 490 35 M466 67 Q480 70 494 65" stroke="#e6d69a" stroke-width="2" fill="none" stroke-dasharray="2.5 1.5" opacity="0.8"/>
<ellipse cx="478.9" cy="50.5" rx="18.3" ry="13.3" fill="#d6d6da" stroke="#1e1a10" stroke-width="1.1"/>
<g transform="translate(478.5,51) scale(0.6)"><path d="M-23 -4 L-20 5 L-16 11 L-9 16 L0 17 L8 14 L12 7 L6 2 L-4 -1 L-14 -4 Z" fill="#b8961f"/><path d="M-24 -7 L-14 -13 L-5 -15 L-2 -8 L2 0 L13 4 L11 9 L-2 5 L-12 0 L-20 -2 Z" fill="#1f261a"/><path d="M-20 -6 L-8 -11 M-18 -3 L-4 -8 M-10 -1 L0 -4" stroke="#8a8a3a" stroke-width="0.9" stroke-dasharray="1 1.2"/><path d="M-5 -15 L-2 -16 L5 -3 L7 2 L2 3 L-3 -7 Z" fill="#c81e1e"/><path d="M0 -13 L9 -9 L17 -3 L21 3 L12 5 L5 0 Z" fill="#5c9a2a"/><path d="M8 -8 L17 -3 L20 2 L13 2 Z" fill="#8ac23e"/><path d="M2 -14 L14 -12 L24 -8 L16 -6 L6 -10 Z" fill="#c09a68"/><circle cx="-13" cy="6" r="1.6" fill="#d02020"/><circle cx="-8" cy="14" r="1.2" fill="#d02020"/><path d="M-21 0 L-18 4 L-14 3 M-16 9 L-12 12 M-4 8 L2 10" stroke="#3a2a10" stroke-width="0.9" fill="none"/></g>
<ellipse cx="479.1" cy="165" rx="28.9" ry="20" fill="#c8c8cc"/>
<g transform="translate(479,165) scale(1.0)"><path d="M-23 -4 L-20 5 L-16 11 L-9 16 L0 17 L8 14 L12 7 L6 2 L-4 -1 L-14 -4 Z" fill="#b8961f"/><path d="M-24 -7 L-14 -13 L-5 -15 L-2 -8 L2 0 L13 4 L11 9 L-2 5 L-12 0 L-20 -2 Z" fill="#1f261a"/><path d="M-20 -6 L-8 -11 M-18 -3 L-4 -8 M-10 -1 L0 -4" stroke="#8a8a3a" stroke-width="0.9" stroke-dasharray="1 1.2"/><path d="M-5 -15 L-2 -16 L5 -3 L7 2 L2 3 L-3 -7 Z" fill="#c81e1e"/><path d="M0 -13 L9 -9 L17 -3 L21 3 L12 5 L5 0 Z" fill="#5c9a2a"/><path d="M8 -8 L17 -3 L20 2 L13 2 Z" fill="#8ac23e"/><path d="M2 -14 L14 -12 L24 -8 L16 -6 L6 -10 Z" fill="#c09a68"/><circle cx="-13" cy="6" r="1.6" fill="#d02020"/><circle cx="-8" cy="14" r="1.2" fill="#d02020"/><path d="M-21 0 L-18 4 L-14 3 M-16 9 L-12 12 M-4 8 L2 10" stroke="#3a2a10" stroke-width="0.9" fill="none"/></g>
<ellipse cx="479" cy="279.2" rx="28.5" ry="20" fill="#cf1818" stroke="#a01010" stroke-width="0.8"/>
<ellipse cx="479" cy="279.2" rx="23" ry="16" fill="#d4d4d8"/>
<g transform="translate(479.5,278.2) scale(0.8)"><path d="M-24 -7 L-14 -13 L-5 -15 L-2 -8 L2 0 L13 4 L11 9 L-2 5 L-12 0 L-20 -2 Z" fill="#262626"/><path d="M-19 -5 L-8 -10 M-17 -2 L-4 -7 M-10 0 L0 -4" stroke="#b0b0b0" stroke-width="0.8" stroke-dasharray="1 1.2"/><path d="M-5 -15 L-2 -16 L5 -3 L7 2 L2 3 L-3 -7 Z" fill="#c01c1c"/><path d="M1 -12 L9 -8 L14 -2 L10 2 L5 -1 Z" fill="#5a8a3a"/><path d="M3 -13 L14 -12 L23 -8 L16 -5 L8 -9 Z" fill="#2a2a2a"/><path d="M-21 3 L-18 8 L-12 10 M-14 13 L-8 16 L-2 15 M4 10 L8 14" stroke="#1e1e1e" stroke-width="1" fill="none"/><circle cx="-10" cy="6" r="1.2" fill="#c02020"/></g>
<ellipse cx="479" cy="393.2" rx="28.5" ry="20" fill="#cf1818" stroke="#a01010" stroke-width="0.8"/>
<ellipse cx="479" cy="393.2" rx="23" ry="16" fill="#d4d4d8"/>
<g transform="translate(479.5,392.2) scale(0.8)"><path d="M-24 -7 L-14 -13 L-5 -15 L-2 -8 L2 0 L13 4 L11 9 L-2 5 L-12 0 L-20 -2 Z" fill="#262626"/><path d="M-19 -5 L-8 -10 M-17 -2 L-4 -7 M-10 0 L0 -4" stroke="#b0b0b0" stroke-width="0.8" stroke-dasharray="1 1.2"/><path d="M-5 -15 L-2 -16 L5 -3 L7 2 L2 3 L-3 -7 Z" fill="#c01c1c"/><path d="M1 -12 L9 -8 L14 -2 L10 2 L5 -1 Z" fill="#5a8a3a"/><path d="M3 -13 L14 -12 L23 -8 L16 -5 L8 -9 Z" fill="#2a2a2a"/><path d="M-21 3 L-18 8 L-12 10 M-14 13 L-8 16 L-2 15 M4 10 L8 14" stroke="#1e1e1e" stroke-width="1" fill="none"/><circle cx="-10" cy="6" r="1.2" fill="#c02020"/></g>
<ellipse cx="478.9" cy="507" rx="28.6" ry="20.2" fill="#e6e6e6"/>
</svg>
<div class="a" style="left:451px;top:747px;width:62px;height:62px;background:#434246;"></div>
<div class="t" style="left:470.5px;top:771.65px;font-size:14px;color:#c4c4c4;font-weight:400;letter-spacing:0.3px;-webkit-text-stroke:0.4px #c4c4c4;">Top</div>
<div class="a" style="left:512px;top:797px;width:96px;height:16px;background:#a7a7a9;"></div>
<div class="a" style="left:611px;top:797px;width:17px;height:16px;background:#a7a7a9;"></div>
<svg style="left:0;top:0" width="1111" height="833"><path d="M632 797 L649 797 L632 813 Z" fill="#a7a7a9"/></svg>
<div class="t" style="left:520px;top:800.88px;font-size:9px;color:#929295;font-weight:400;letter-spacing:2.2px;">FUJT'I  TOTO</div>
<svg style="left:0;top:0" width="1111" height="833">
<rect x="447.5" y="752" width="3" height="61" fill="#82cc82"/>
<path d="M449 741.5 L455 753 L443 753 Z" fill="#82cc82"/>
<rect x="449" y="810" width="59" height="3.2" fill="#e68f8f"/>
<path d="M519 811.6 L506.5 805 L506.5 818 Z" fill="#e68f8f"/>
<path d="M449 806 L455.5 817 L442.5 817 Z" fill="#8b8bd8"/>
</svg>
<div class="t" style="left:444px;top:722.00px;font-size:13px;color:#80c080;font-weight:400;letter-spacing:0px;">y</div>
<div class="t" style="left:528px;top:804.00px;font-size:13px;color:#d88080;font-weight:400;letter-spacing:0px;">x</div>
<div class="a" style="left:716px;top:797px;width:420px;height:24px;background:#3f3e43;border-radius:12px 0 0 12px"></div>
<div class="a" style="left:721.6px;top:802.4px;width:400px;height:13px;background:#00ae42;border-radius:6.5px 0 0 6.5px"></div>
<svg style="left:552px;top:792px" width="38" height="38">
<circle cx="19" cy="19" r="18.5" fill="#232325"/>
<path d="M10 15 L10 11.5 Q10 10 11.5 10 L15 10 M23 10 L26.5 10 Q28 10 28 11.5 L28 15 M28 23 L28 26.5 Q28 28 26.5 28 L23 28 M15 28 L11.5 28 Q10 28 10 26.5 L10 23" fill="none" stroke="#e8e8e8" stroke-width="1.6"/>
<path d="M19 13.5 L24 16.2 L24 21.8 L19 24.5 L14 21.8 L14 16.2 Z M14 16.2 L19 19 L24 16.2 M19 19 L19 24.5" fill="none" stroke="#e8e8e8" stroke-width="1.3" stroke-linejoin="round"/>
</svg>
</body></html>
